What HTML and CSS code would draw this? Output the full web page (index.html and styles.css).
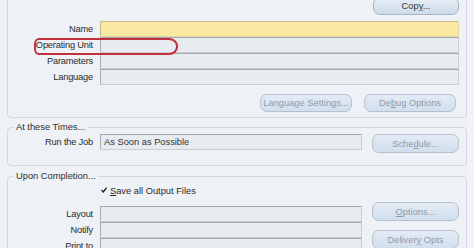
FILE: index.html
```html
<!DOCTYPE html>
<html lang="en">
<head>
    <meta charset="UTF-8">
    <meta name="viewport" content="width=device-width, initial-scale=1.0">
    <title>Submit Request</title>
    <link rel="stylesheet" href="styles.css">
</head>
<body>
    <div class="form">
        <div class="panel">
            <div class="copy-row">
                <button class="btn btn-copy">Cop<u>y</u>...</button>
            </div>
            <div class="fields">
                <div class="row"><span class="label">Name</span><div class="field required"></div></div>
                <div class="row"><span class="label">Operating Unit</span><div class="field"></div></div>
                <div class="row"><span class="label">Parameters</span><div class="field"></div></div>
                <div class="row"><span class="label">Language</span><div class="field"></div></div>
            </div>
            <div class="actions">
                <button class="btn disabled">Language Settings...</button>
                <button class="btn disabled">De<u>b</u>ug Options</button>
            </div>
        </div>

        <fieldset class="group group-times">
            <legend>At these Times...</legend>
            <div class="split">
                <div class="col">
                    <div class="row"><span class="label">Run the Job</span><div class="field short">As Soon as Possible</div></div>
                </div>
                <div class="btns">
                    <button class="btn disabled">Sche<u>d</u>ule...</button>
                </div>
            </div>
        </fieldset>

        <fieldset class="group group-completion">
            <legend>Upon Completion...</legend>
            <div class="check-row">
                <svg class="check" width="6" height="6" viewBox="0 0 6 6">
                    <path d="M0.5 3 L2.3 5 L5.6 0.6" fill="none" stroke="#222" stroke-width="1.3"/>
                </svg>
                <span><u>S</u>ave all Output Files</span>
            </div>
            <div class="split split-completion">
                <div class="col col-completion">
                    <div class="row"><span class="label">Layout</span><div class="field short"></div></div>
                    <div class="row"><span class="label">Notify</span><div class="field short"></div></div>
                    <div class="row"><span class="label">Print to</span><div class="field short"></div></div>
                </div>
                <div class="btns btns-stack">
                    <button class="btn disabled"><u>O</u>ptions...</button>
                    <button class="btn disabled">Deliver<u>y</u> Opts</button>
                </div>
            </div>
        </fieldset>

        <div class="annotation"></div>
    </div>
</body>
</html>
```

FILE: styles.css
```css
html, body {
    margin: 0;
    padding: 0;
}
body {
    font-family: "Liberation Sans", Arial, sans-serif;
    font-size: 9.3px;
    color: #2b2b2b;
    background-color: #f1f3f7;
    width: 474px;
    height: 248px;
    overflow: hidden;
}
.form {
    display: flow-root;
    position: relative;
    width: 460px;
    padding-left: 7px;
    background-color: #eef1f5;
    height: 248px;
}
.panel {
    margin-top: -10px;
    border: 1px solid #d3d8df;
    border-radius: 4px;
    padding: 6px 7px 5px 0;
    box-sizing: border-box;
}
.copy-row {
    display: flex;
    justify-content: flex-end;
}
.btn {
    font-family: inherit;
    font-size: 9.3px;
    color: #3a3a3a;
    height: 18px;
    padding: 0;
    border: 1px solid #a9b5c4;
    border-radius: 7px;
    background: linear-gradient(#e6eef6, #cddbea);
    box-sizing: border-box;
}
.btn.disabled {
    color: #8e9aaa;
    border-color: #b4c0ce;
    background: linear-gradient(#e3ecf5, #d1deec);
}
.btn-copy {
    width: 86px;
}
.fields {
    margin-top: 6px;
}
.row {
    display: flex;
    align-items: center;
    height: 16px;
}
.label {
    width: 92px;
    padding-right: 7px;
    box-sizing: border-box;
    text-align: right;
    white-space: nowrap;
    letter-spacing: -0.2px;
}
.field {
    flex: 1;
    height: 16px;
    box-sizing: border-box;
    border: 1px solid;
    border-color: #a2a7ae #c9ced5 #c9ced5 #aab0b7;
    background-color: #e8ecf1;
    padding-left: 3px;
    line-height: 14px;
    color: #333;
}
.field.required {
    background-color: #fbe8a3;
    border-color: #c7bb8a #e2d6a2 #e2d6a2 #c7bb8a;
}
.actions {
    display: flex;
    justify-content: flex-end;
    gap: 12px;
    margin-top: 9px;
    padding-right: 3px;
}
.actions .btn {
    width: 92px;
}
.group {
    margin: 4px 0 0 0;
    padding: 0 7px 0 0;
    border: 1px solid #d3d8df;
    border-radius: 4px;
    width: 460px;
    box-sizing: border-box;
    min-width: 0;
}
.group legend {
    margin-left: 6px;
    padding: 0 2px;
    line-height: 11px;
    color: #2e2e2e;
}
.group-times {
    padding-top: 1px;
    padding-bottom: 12px;
}
.group-completion {
    margin-top: 5px;
}
.split {
    display: flex;
    gap: 10px;
}
.col {
    width: 354px;
}
.btns .btn {
    width: 87px;
    height: 19px;
}
.check-row {
    display: flex;
    align-items: center;
    gap: 3px;
    margin-top: 3px;
    padding-left: 93px;
    height: 11px;
}
.check {
    margin-top: -2px;
}
.split-completion {
    margin-top: 6px;
}
.col-completion {
    padding-top: 4px;
}
.btns-stack {
    display: flex;
    flex-direction: column;
    gap: 9px;
}
.annotation {
    position: absolute;
    left: 34px;
    top: 38px;
    width: 144px;
    height: 17px;
    box-sizing: border-box;
    border: 2px solid #c3303d;
    border-radius: 5px 9px 9px 5px / 6px 8px 8px 6px;
}
```
